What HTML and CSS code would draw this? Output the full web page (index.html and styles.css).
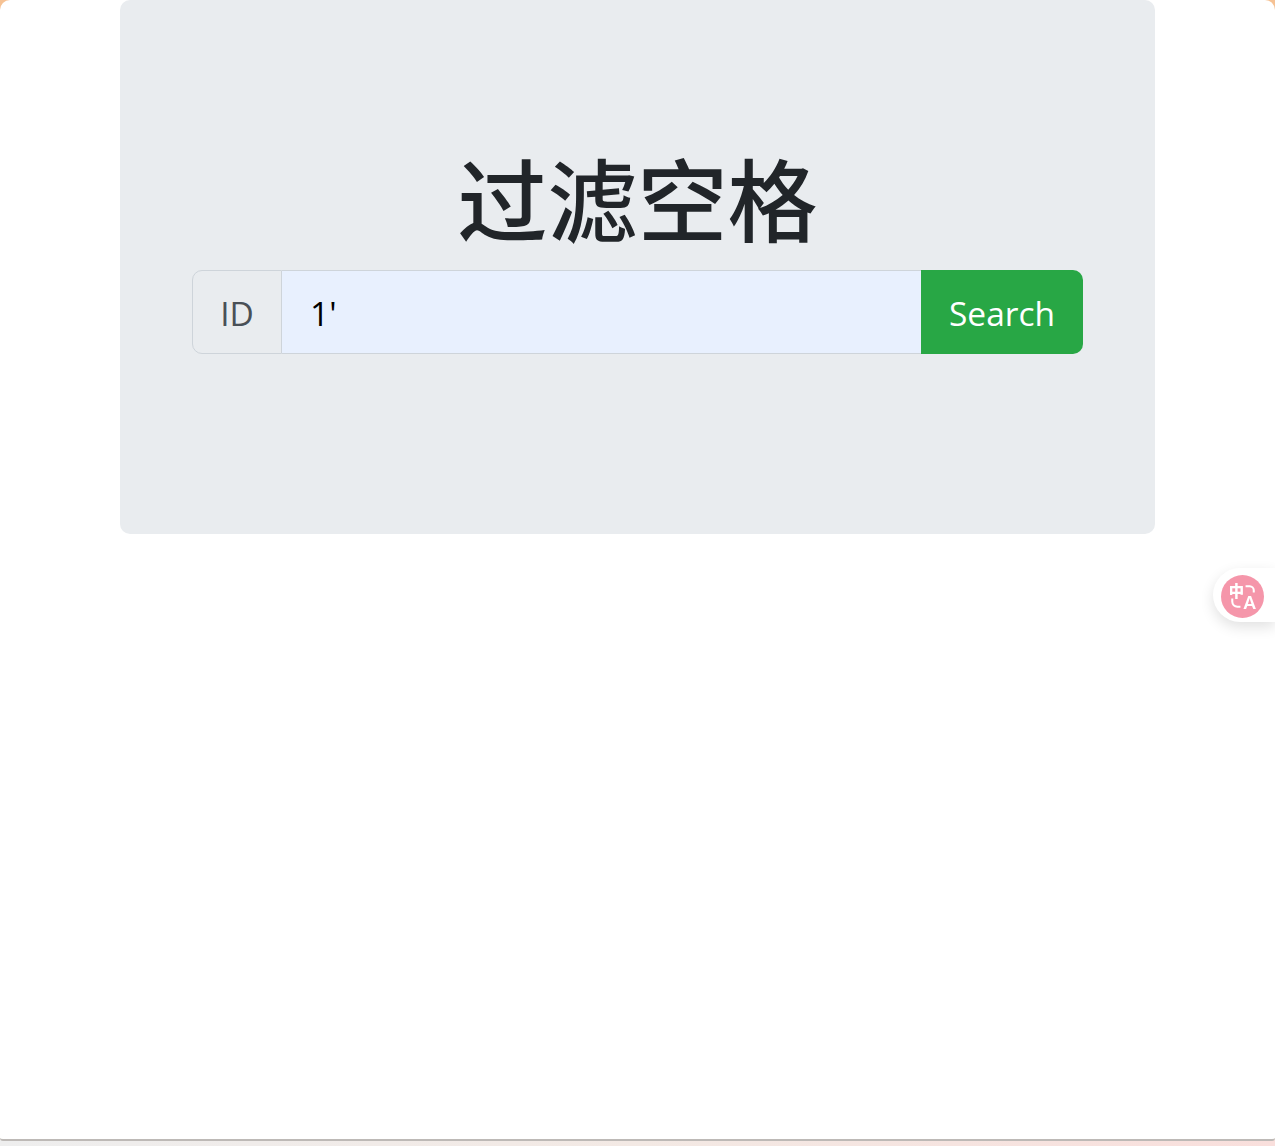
FILE: index.html
```html
<!DOCTYPE html>
<html lang="zh">
<head>
<meta charset="utf-8">
<title>过滤空格</title>
<link rel="stylesheet" href="styles.css">
</head>
<body>
<div class="window">
  <main class="jumbotron">
    <h1 class="title">过滤空格</h1>
    <form class="input-group">
      <span class="addon">ID</span>
      <input class="field" type="text" value="1'">
      <button class="search" type="button">Search</button>
    </form>
  </main>
</div>
<aside class="translate-widget">
  <svg class="translate-icon" width="43" height="43" viewBox="0 0 42 42">
    <circle cx="21" cy="21" r="21" fill="#f596aa"/>
    <text class="glyph-zh" x="15" y="21.5" text-anchor="middle">中</text>
    <text class="glyph-a" x="28" y="33" text-anchor="middle">A</text>
    <path d="M24 11h4a4 4 0 0 1 4 4v2M11 23v3a5 5 0 0 0 5 5h3" fill="none" stroke="#fff" stroke-width="2"/>
  </svg>
</aside>
</body>
</html>
```
FILE: styles.css
```css
html, body {
  margin: 0;
  height: 1146px;
  overflow: hidden;
}
body {
  background:
    linear-gradient(#f6c294, #f6c294) top / 100% 1139px no-repeat,
    linear-gradient(90deg, #eeeeee 0%, #f3e9e4 50%, #f9dfdc 100%);
  font-family: "Open Sans", "Noto Sans", sans-serif;
}
.window {
  height: 1139px;
  background: #fff;
  border-bottom: 2px solid #bdb9b6;
  border-radius: 10px 10px 3px 3px;
}
.jumbotron {
  box-sizing: border-box;
  width: 1035px;
  height: 534px;
  margin: 0 auto;
  padding: 140px 72px 0;
  background: #e9ecef;
  border-radius: 10px;
}
.title {
  margin: 0;
  height: 130px;
  text-align: center;
  font-family: "Noto Sans CJK SC", sans-serif;
  font-size: 90px;
  font-weight: 500;
  line-height: 112px;
  color: #212529;
}
.input-group {
  display: flex;
  height: 84px;
}
.addon {
  box-sizing: border-box;
  width: 90px;
  display: flex;
  align-items: center;
  justify-content: center;
  padding-top: 2px;
  background: #e9ecef;
  border: 1.5px solid #ced4da;
  border-radius: 10px 0 0 10px;
  color: #495057;
  font-size: 33.5px;
}
.field {
  flex: 1;
  min-width: 0;
  box-sizing: border-box;
  padding: 2px 28px 0;
  background: #e8f0fe;
  border: 1.5px solid #ced4da;
  border-left: 0;
  border-right: 0;
  outline: 0;
  color: #000;
  font-family: inherit;
  font-size: 33.5px;
}
.search {
  width: 162px;
  padding: 2px 0 0;
  background: #28a745;
  border: 0;
  border-radius: 0 10px 10px 0;
  color: #fff;
  font-family: inherit;
  font-size: 33.5px;
}
.translate-widget {
  position: fixed;
  right: 0;
  top: 568px;
  width: 62px;
  height: 54px;
  box-sizing: border-box;
  padding: 7px 0 0 8px;
  background: #fff;
  border-radius: 27px 0 0 27px;
  box-shadow: 0 5px 14px rgba(0, 0, 0, 0.12);
}
.translate-icon {
  display: block;
}
.glyph-zh {
  font-family: "Noto Sans CJK SC", sans-serif;
  font-size: 15px;
  font-weight: 900;
  fill: #fff;
}
.glyph-a {
  font-family: "Noto Sans", sans-serif;
  font-size: 18px;
  font-weight: 600;
  fill: #fff;
}
```
